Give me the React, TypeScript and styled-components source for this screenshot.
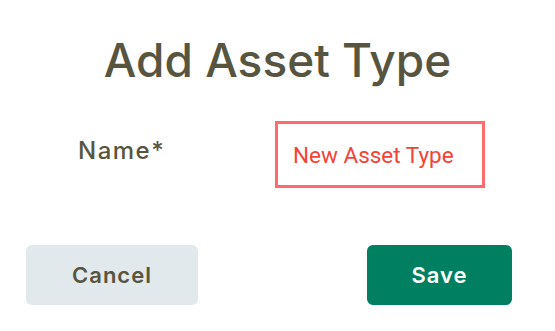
import { useState } from 'react';
import styled, { createGlobalStyle } from 'styled-components';

const GlobalStyle = createGlobalStyle`
  html, body {
    margin: 0;
    padding: 0;
    background: #ffffff;
  }
  body {
    font-family: 'Inter', 'Noto Sans', sans-serif;
  }
`;

const Dialog = styled.div`
  width: 555px;
  height: 331px;
  box-sizing: border-box;
  padding-top: 31px;
  display: flex;
  flex-direction: column;
  background: #ffffff;
`;

const Title = styled.h1`
  margin: 0;
  text-align: center;
  font-family: 'Inter', 'Noto Sans', sans-serif;
  font-size: 46px;
  font-weight: 500;
  line-height: 58px;
  color: #57553f;
`;

const FieldRow = styled.div`
  display: grid;
  grid-template-columns: 275px 210px;
  align-items: center;
  margin-top: 32px;
  height: 67px;
`;

const Label = styled.label`
  padding-left: 78px;
  font-family: 'Inter', 'Noto Sans', sans-serif;
  font-size: 24px;
  font-weight: 500;
  letter-spacing: 1.5px;
  color: #57553f;
  align-self: start;
  margin-top: 15px;
`;

const Input = styled.input`
  box-sizing: border-box;
  width: 210px;
  height: 67px;
  padding: 0 15px;
  border: 3px solid #ff6b6b;
  border-radius: 0;
  outline: none;
  font-family: 'Roboto', 'Liberation Sans', sans-serif;
  font-size: 22.5px;
  color: #f44336;
  background: #ffffff;
`;

const Actions = styled.div`
  display: flex;
  justify-content: space-between;
  padding: 0 43px 0 26px;
  margin-top: 57px;
`;

const Button = styled.button<{ $primary?: boolean; $width: number }>`
  width: ${({ $width }) => $width}px;
  height: 60px;
  border: none;
  border-radius: 6px;
  cursor: pointer;
  font-family: 'Inter', 'Noto Sans', sans-serif;
  font-size: 22px;
  font-weight: 600;
  letter-spacing: 1px;
  background: ${({ $primary }) => ($primary ? '#008060' : '#e1e9ec')};
  color: ${({ $primary }) => ($primary ? '#ffffff' : '#57553f')};
`;

export default function App() {
  const [name, setName] = useState('New Asset Type');

  return (
    <>
      <GlobalStyle />
      <Dialog>
        <Title>Add Asset Type</Title>
        <FieldRow>
          <Label htmlFor="asset-name">Name*</Label>
          <Input id="asset-name" value={name} onChange={(e) => setName(e.target.value)} />
        </FieldRow>
        <Actions>
          <Button $width={172}>Cancel</Button>
          <Button $primary $width={145}>Save</Button>
        </Actions>
      </Dialog>
    </>
  );
}
